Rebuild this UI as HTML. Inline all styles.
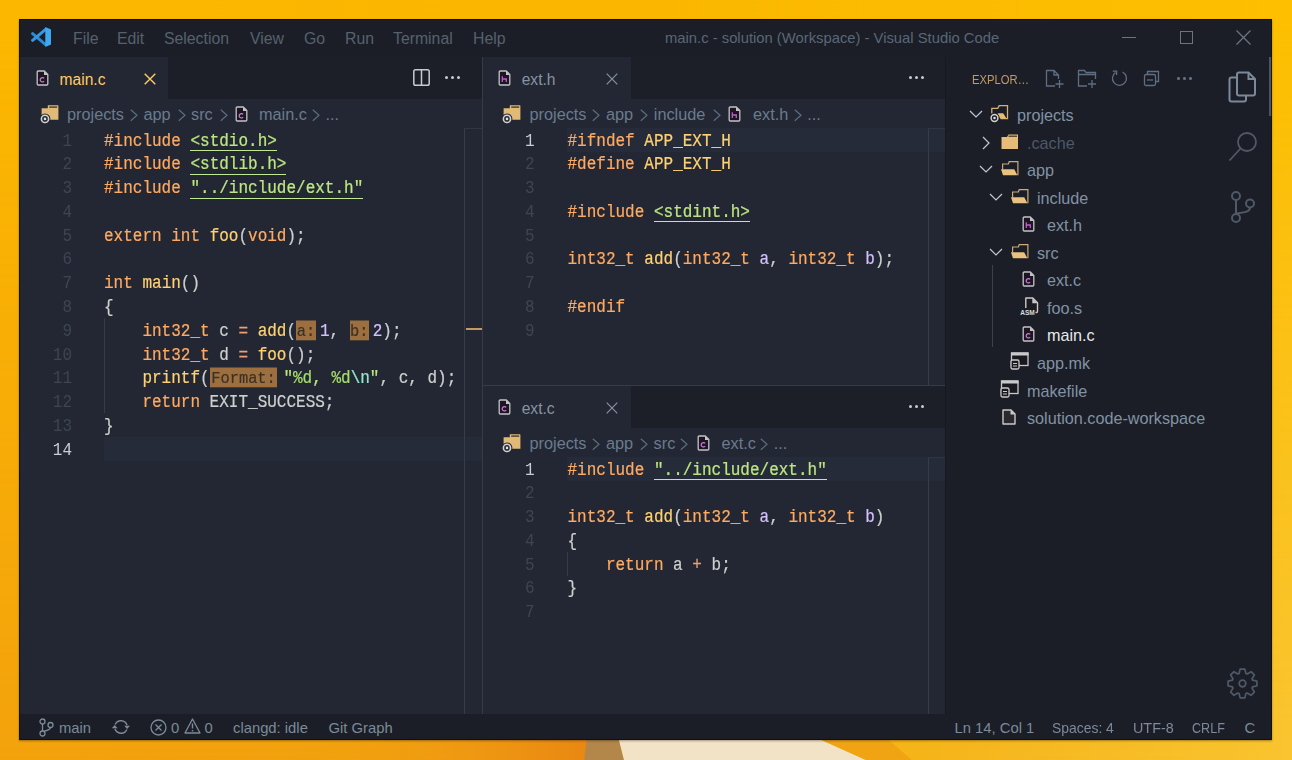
<!DOCTYPE html>
<html><head><meta charset="utf-8">
<style>
*{margin:0;padding:0;box-sizing:border-box}
html,body{width:1292px;height:760px;overflow:hidden}
body{position:relative;background:#f6b308;font-family:"Liberation Sans",sans-serif}
.abs{position:absolute}
.ui{position:absolute;font-family:"Liberation Sans",sans-serif;white-space:nowrap;line-height:20px}
.mono{font-family:"Liberation Mono",monospace;font-size:16px;white-space:pre;line-height:18px;transform:scaleY(1.1);transform-origin:0 14px;-webkit-text-stroke:0.2px currentColor}
.ln{position:absolute;font-family:"Liberation Mono",monospace;font-size:16px;line-height:18px;color:#3d4553;text-align:right;width:40px;transform:scaleY(1.1);transform-origin:0 14px}
.ln.act{color:#c9ced6}
.k{color:#ffaa62}.f{color:#ffd173}.s{color:#bde682}.o{color:#f29e74}.p{color:#d4bfff}.t{color:#cdd0cc}.e{color:#95e6cb}.pc{color:#a5de6a}
.ul{text-decoration:underline;text-decoration-color:#aad86e;text-underline-offset:3px;text-decoration-thickness:1px}
.hint{display:inline-block;background:#9d6f3e;height:18.2px;vertical-align:top;text-align:center;margin-top:-1.2px;position:relative}
.hi{position:absolute;left:0;right:0;top:2.6px;color:#3c3124;font-size:15.4px;line-height:17px;transform:scaleY(0.93);transform-origin:0 15px}
.bc{position:absolute;font-family:"Liberation Sans",sans-serif;font-size:16.3px;color:#6a7b8e;white-space:nowrap;line-height:20px}
.ex{position:absolute;font-family:"Liberation Sans",sans-serif;font-size:16.2px;color:#8594a6;white-space:nowrap;line-height:20px}
.sb{position:absolute;font-family:"Liberation Sans",sans-serif;font-size:14.8px;color:#7c8a9a;white-space:nowrap;line-height:20px}
</style></head><body>
<div class="abs" style="left:0;top:0;width:1292px;height:760px;background:linear-gradient(90deg,#fcb800 0%,#fbb700 50%,#fdbf00 100%)"></div>
<div class="abs" style="left:0;top:0;width:1292px;height:760px;background:linear-gradient(90deg,#f3a20c 0%,#f1a00f 40%,#f5b31a 72%,#f9c430 100%);-webkit-mask-image:linear-gradient(180deg,transparent 0%,transparent 3%,black 100%);mask-image:linear-gradient(180deg,transparent 0%,transparent 3%,black 100%)"></div>
<svg class="abs" style="left:0;top:740px" width="1292" height="20" viewBox="0 0 1292 20">
<defs><linearGradient id="og" x1="0" x2="1"><stop offset="0" stop-color="#f2a00e" stop-opacity="0"/><stop offset="0.6" stop-color="#ef9812"/><stop offset="1" stop-color="#e98812"/></linearGradient>
<linearGradient id="yg" x1="0" x2="1"><stop offset="0" stop-color="#f5b416"/><stop offset="1" stop-color="#f6bb28" stop-opacity="0"/></linearGradient></defs>
<path d="M300 0H587L584 20H300Z" fill="url(#og)"/>
<path d="M586.5 0H619L624 20H584Z" fill="#b3864a"/>
<path d="M619 0H821.5L866 20H624Z" fill="#f2e2c6"/>
<path d="M821.5 0H889L912 20H866Z" fill="#f0a414"/>
<path d="M889 0H1100V20H912Z" fill="url(#yg)"/>
</svg>
<div class="abs" style="left:19px;top:19px;width:1253px;height:721px;background:#1b1e26;box-shadow:0 1px 2px rgba(0,0,0,0.35)"></div>

<svg class="abs" style="left:31px;top:27px" width="20" height="20" viewBox="0 0 20 20">
<path d="M1.6 6.6L14.6 17.6" stroke="#2a8ad6" stroke-width="3" stroke-linecap="round"/>
<path d="M1.6 13.4L14.6 2.4" stroke="#3597e0" stroke-width="3" stroke-linecap="round"/>
<path d="M14.3 0L20 2.6V17.4L14.3 20Z" fill="#40a8f0"/>
</svg>
<div class="ui" style="left:73px;top:28.5px;font-size:15.8px;color:#57616e">File</div>
<div class="ui" style="left:117px;top:28.5px;font-size:15.8px;color:#57616e">Edit</div>
<div class="ui" style="left:164px;top:28.5px;font-size:15.8px;color:#57616e">Selection</div>
<div class="ui" style="left:250px;top:28.5px;font-size:15.8px;color:#57616e">View</div>
<div class="ui" style="left:304px;top:28.5px;font-size:15.8px;color:#57616e">Go</div>
<div class="ui" style="left:345px;top:28.5px;font-size:15.8px;color:#57616e">Run</div>
<div class="ui" style="left:393px;top:28.5px;font-size:15.8px;color:#57616e">Terminal</div>
<div class="ui" style="left:473px;top:28.5px;font-size:15.8px;color:#57616e">Help</div>
<div class="ui" style="left:665px;top:27.5px;font-size:14.8px;color:#5a6778">main.c - solution (Workspace) - Visual Studio Code</div>
<div class="abs" style="left:1122px;top:37px;width:14px;height:1.2px;background:#6b7482"></div>
<div class="abs" style="left:1180px;top:30.5px;width:13px;height:13px;border:1.2px solid #6b7482"></div>
<svg class="abs" style="left:1236px;top:30px" width="15" height="15" viewBox="0 0 15 15"><path d="M0.5 0.5L14.5 14.5M14.5 0.5L0.5 14.5" stroke="#6b7482" stroke-width="1.3"/></svg>
<div class="abs" style="left:19px;top:57px;width:463px;height:42px;background:#1c1f28"></div>
<div class="abs" style="left:19px;top:57px;width:149px;height:42px;background:#222733"></div>
<svg class="abs" style="left:35.5px;top:70px" width="13" height="16" viewBox="0 0 13 16"><path d="M2.2 1H8.3L11.8 4.5V14A1 1 0 0 1 10.8 15H2.2A1 1 0 0 1 1.2 14V2A1 1 0 0 1 2.2 1Z" fill="#1d1622" stroke="#c4c4c8" stroke-width="1.3" stroke-linejoin="round"/><path d="M8 1V5H11.8Z" fill="#c4c4c8"/><path d="M8.1 8.4A2.2 2.2 0 1 0 8.1 11.2" fill="none" stroke="#c77ad8" stroke-width="1.25"/></svg>
<div class="ui" style="left:59.5px;top:69.5px;font-size:15.6px;color:#ffcc66">main.c</div>
<svg class="abs" style="left:144px;top:72.5px" width="12" height="12" viewBox="0 0 12 12"><path d="M0.7 0.7L11.3 11.3M11.3 0.7L0.7 11.3" stroke="#ffcc66" stroke-width="1.4"/></svg>
<div class="abs" style="left:19px;top:99px;width:463px;height:615px;background:#222733"></div>
<svg class="abs" style="left:412.5px;top:69px" width="17" height="17" viewBox="0 0 17 17"><rect x="0.8" y="0.8" width="15.4" height="15.4" rx="1.8" fill="none" stroke="#c6cad2" stroke-width="1.5"/><path d="M8.5 1V16" stroke="#c6cad2" stroke-width="1.5"/></svg>
<div class="abs" style="left:444.8px;top:76.2px;width:3px;height:3px;border-radius:50%;background:#c8ccd4"></div><div class="abs" style="left:451.0px;top:76.2px;width:3px;height:3px;border-radius:50%;background:#c8ccd4"></div><div class="abs" style="left:457.2px;top:76.2px;width:3px;height:3px;border-radius:50%;background:#c8ccd4"></div>
<svg class="abs" style="left:39.5px;top:103.5px" width="20" height="20" viewBox="0 0 20 20"><path d="M1.6 4.2H7.8V1.2H17.8A0.6 0.6 0 0 1 18.4 1.8V15.8H1.6Z" fill="#e2ba78"/><path d="M9.2 3.1H17.2" stroke="#3a3020" stroke-width="1.3"/><circle cx="5" cy="14.9" r="5.4" fill="#23272f"/><circle cx="5" cy="14.9" r="3.6" fill="none" stroke="#d2d2d2" stroke-width="1.6"/><circle cx="5" cy="14.9" r="1.3" fill="#e0e0e0"/></svg>
<div class="bc" style="left:67px;top:104px">projects</div>
<svg class="abs" style="left:129.7px;top:108.7px" width="9" height="13" viewBox="0 0 9 13"><path d="M0.8 0.8L7 6.3L0.8 11.8" fill="none" stroke="#5c6d80" stroke-width="1.2"/></svg>
<div class="bc" style="left:143.5px;top:104px">app</div>
<svg class="abs" style="left:178px;top:108.7px" width="9" height="13" viewBox="0 0 9 13"><path d="M0.8 0.8L7 6.3L0.8 11.8" fill="none" stroke="#5c6d80" stroke-width="1.2"/></svg>
<div class="bc" style="left:191px;top:104px">src</div>
<svg class="abs" style="left:219.5px;top:108.7px" width="9" height="13" viewBox="0 0 9 13"><path d="M0.8 0.8L7 6.3L0.8 11.8" fill="none" stroke="#5c6d80" stroke-width="1.2"/></svg>
<svg class="abs" style="left:234.5px;top:105.5px" width="13" height="16" viewBox="0 0 13 16"><path d="M2.2 1H8.3L11.8 4.5V14A1 1 0 0 1 10.8 15H2.2A1 1 0 0 1 1.2 14V2A1 1 0 0 1 2.2 1Z" fill="#1d1622" stroke="#c4c4c8" stroke-width="1.3" stroke-linejoin="round"/><path d="M8 1V5H11.8Z" fill="#c4c4c8"/><path d="M8.1 8.4A2.2 2.2 0 1 0 8.1 11.2" fill="none" stroke="#c77ad8" stroke-width="1.25"/></svg>
<div class="bc" style="left:259px;top:104px">main.c</div>
<svg class="abs" style="left:312.2px;top:108.7px" width="9" height="13" viewBox="0 0 9 13"><path d="M0.8 0.8L7 6.3L0.8 11.8" fill="none" stroke="#5c6d80" stroke-width="1.2"/></svg>
<div class="bc" style="left:325.5px;top:104px">...</div>
<div class="abs" style="left:104px;top:437.14px;width:378px;height:23.78px;background:#252b38"></div>
<div class="abs" style="left:104px;top:318.24px;width:1px;height:95.12px;background:#353b48"></div>
<div class="abs" style="left:464px;top:128px;width:1px;height:586px;background:#363c49"></div>
<div class="abs" style="left:464px;top:128px;width:18px;height:1px;background:#303642"></div>
<div class="abs" style="left:466px;top:328px;width:16px;height:2px;background:#c39a5e"></div>
<div class="ln" style="left:32px;top:132.50px">1</div>
<div class="abs mono t" style="left:104px;top:132.50px"><span class="k">#include</span> <span class="s">&lt;stdio.h&gt;</span></div>
<div class="ln" style="left:32px;top:156.28px">2</div>
<div class="abs mono t" style="left:104px;top:156.28px"><span class="k">#include</span> <span class="s">&lt;stdlib.h&gt;</span></div>
<div class="ln" style="left:32px;top:180.06px">3</div>
<div class="abs mono t" style="left:104px;top:180.06px"><span class="k">#include</span> <span class="s">"../include/ext.h"</span></div>
<div class="ln" style="left:32px;top:203.84px">4</div>
<div class="ln" style="left:32px;top:227.62px">5</div>
<div class="abs mono t" style="left:104px;top:227.62px"><span class="k">extern</span> <span class="k">int</span> <span class="f">foo</span>(<span class="k">void</span>);</div>
<div class="ln" style="left:32px;top:251.40px">6</div>
<div class="ln" style="left:32px;top:275.18px">7</div>
<div class="abs mono t" style="left:104px;top:275.18px"><span class="k">int</span> <span class="f">main</span>()</div>
<div class="ln" style="left:32px;top:298.96px">8</div>
<div class="abs mono t" style="left:104px;top:298.96px">{</div>
<div class="ln" style="left:32px;top:322.74px">9</div>
<div class="abs mono t" style="left:104px;top:322.74px">    <span class="k">int32_t</span> c <span class="o">=</span> <span class="f">add</span>(<span class="hint" style="width:19.8px;margin-left:0px;margin-right:4px"><span class="hi">a:</span></span><span class="p">1</span>, <span class="hint" style="width:18.7px;margin-left:1.3px;margin-right:4px"><span class="hi">b:</span></span><span class="p">2</span>);</div>
<div class="ln" style="left:32px;top:346.52px">10</div>
<div class="abs mono t" style="left:104px;top:346.52px">    <span class="k">int32_t</span> d <span class="o">=</span> <span class="f">foo</span>();</div>
<div class="ln" style="left:32px;top:370.30px">11</div>
<div class="abs mono t" style="left:104px;top:370.30px">    <span class="f">printf</span>(<span class="hint" style="width:67.2px;margin-left:0.3px;margin-right:6.3px"><span class="hi">Format:</span></span><span class="s">"</span><span class="pc">%d</span><span class="s">, </span><span class="pc">%d</span><span class="e">\n</span><span class="s">"</span>, c, d);</div>
<div class="ln" style="left:32px;top:394.08px">12</div>
<div class="abs mono t" style="left:104px;top:394.08px">    <span class="k">return</span> EXIT_SUCCESS;</div>
<div class="ln" style="left:32px;top:417.86px">13</div>
<div class="abs mono t" style="left:104px;top:417.86px">}</div>
<div class="ln act" style="left:32px;top:441.64px">14</div>
<div class="abs" style="left:190.4px;top:150px;width:86.4px;height:1px;background:#c0ea92"></div>
<div class="abs" style="left:190.4px;top:174px;width:96.0px;height:1px;background:#c0ea92"></div>
<div class="abs" style="left:190.4px;top:198px;width:172.8px;height:1px;background:#c0ea92"></div>
<div class="abs" style="left:482px;top:57px;width:1px;height:657px;background:#353b47"></div>
<div class="abs" style="left:483px;top:57px;width:462px;height:42px;background:#1c1f28"></div>
<div class="abs" style="left:483px;top:57px;width:148px;height:42px;background:#222733"></div>
<svg class="abs" style="left:497.7px;top:70px" width="13" height="16" viewBox="0 0 13 16"><path d="M2.2 1H8.3L11.8 4.5V14A1 1 0 0 1 10.8 15H2.2A1 1 0 0 1 1.2 14V2A1 1 0 0 1 2.2 1Z" fill="#1d1622" stroke="#c4c4c8" stroke-width="1.3" stroke-linejoin="round"/><path d="M8 1V5H11.8Z" fill="#c4c4c8"/><path d="M4.3 6.3V12M4.3 9H8.3V12" fill="none" stroke="#c25ad2" stroke-width="1.3"/></svg>
<div class="ui" style="left:521.7px;top:69.5px;font-size:15.6px;color:#8893a1">ext.h</div>
<svg class="abs" style="left:606.2px;top:72.5px" width="12" height="12" viewBox="0 0 12 12"><path d="M0.7 0.7L11.3 11.3M11.3 0.7L0.7 11.3" stroke="#8893a1" stroke-width="1.2"/></svg>
<div class="abs" style="left:483px;top:99px;width:462px;height:286px;background:#222733"></div>
<div class="abs" style="left:908.5px;top:76.2px;width:3px;height:3px;border-radius:50%;background:#c8ccd4"></div><div class="abs" style="left:914.7px;top:76.2px;width:3px;height:3px;border-radius:50%;background:#c8ccd4"></div><div class="abs" style="left:920.9px;top:76.2px;width:3px;height:3px;border-radius:50%;background:#c8ccd4"></div>
<svg class="abs" style="left:501.7px;top:103.5px" width="20" height="20" viewBox="0 0 20 20"><path d="M1.6 4.2H7.8V1.2H17.8A0.6 0.6 0 0 1 18.4 1.8V15.8H1.6Z" fill="#e2ba78"/><path d="M9.2 3.1H17.2" stroke="#3a3020" stroke-width="1.3"/><circle cx="5" cy="14.9" r="5.4" fill="#23272f"/><circle cx="5" cy="14.9" r="3.6" fill="none" stroke="#d2d2d2" stroke-width="1.6"/><circle cx="5" cy="14.9" r="1.3" fill="#e0e0e0"/></svg>
<div class="bc" style="left:529.5px;top:104px">projects</div>
<svg class="abs" style="left:592px;top:108.7px" width="9" height="13" viewBox="0 0 9 13"><path d="M0.8 0.8L7 6.3L0.8 11.8" fill="none" stroke="#5c6d80" stroke-width="1.2"/></svg>
<div class="bc" style="left:606px;top:104px">app</div>
<svg class="abs" style="left:640.3px;top:108.7px" width="9" height="13" viewBox="0 0 9 13"><path d="M0.8 0.8L7 6.3L0.8 11.8" fill="none" stroke="#5c6d80" stroke-width="1.2"/></svg>
<div class="bc" style="left:653.8px;top:104px">include</div>
<svg class="abs" style="left:712.5px;top:108.7px" width="9" height="13" viewBox="0 0 9 13"><path d="M0.8 0.8L7 6.3L0.8 11.8" fill="none" stroke="#5c6d80" stroke-width="1.2"/></svg>
<svg class="abs" style="left:728.3px;top:105.5px" width="13" height="16" viewBox="0 0 13 16"><path d="M2.2 1H8.3L11.8 4.5V14A1 1 0 0 1 10.8 15H2.2A1 1 0 0 1 1.2 14V2A1 1 0 0 1 2.2 1Z" fill="#1d1622" stroke="#c4c4c8" stroke-width="1.3" stroke-linejoin="round"/><path d="M8 1V5H11.8Z" fill="#c4c4c8"/><path d="M4.3 6.3V12M4.3 9H8.3V12" fill="none" stroke="#c25ad2" stroke-width="1.3"/></svg>
<div class="bc" style="left:753px;top:104px">ext.h</div>
<svg class="abs" style="left:793.5px;top:108.7px" width="9" height="13" viewBox="0 0 9 13"><path d="M0.8 0.8L7 6.3L0.8 11.8" fill="none" stroke="#5c6d80" stroke-width="1.2"/></svg>
<div class="bc" style="left:807.2px;top:104px">...</div>
<div class="abs" style="left:567px;top:128px;width:378px;height:23.78px;background:#252b38"></div>
<div class="abs" style="left:928px;top:128px;width:1px;height:257px;background:#363c49"></div>
<div class="abs" style="left:928px;top:128px;width:17px;height:1px;background:#303642"></div>
<div class="ln act" style="left:494.5px;top:132.50px">1</div>
<div class="abs mono t" style="left:567.5px;top:132.50px"><span class="k">#ifndef</span> <span class="f">APP_EXT_H</span></div>
<div class="ln" style="left:494.5px;top:156.28px">2</div>
<div class="abs mono t" style="left:567.5px;top:156.28px"><span class="k">#define</span> <span class="f">APP_EXT_H</span></div>
<div class="ln" style="left:494.5px;top:180.06px">3</div>
<div class="ln" style="left:494.5px;top:203.84px">4</div>
<div class="abs mono t" style="left:567.5px;top:203.84px"><span class="k">#include</span> <span class="s">&lt;stdint.h&gt;</span></div>
<div class="ln" style="left:494.5px;top:227.62px">5</div>
<div class="ln" style="left:494.5px;top:251.40px">6</div>
<div class="abs mono t" style="left:567.5px;top:251.40px"><span class="k">int32_t</span> <span class="f">add</span>(<span class="k">int32_t</span> <span class="p">a</span>, <span class="k">int32_t</span> <span class="p">b</span>);</div>
<div class="ln" style="left:494.5px;top:275.18px">7</div>
<div class="ln" style="left:494.5px;top:298.96px">8</div>
<div class="abs mono t" style="left:567.5px;top:298.96px"><span class="k">#endif</span></div>
<div class="ln" style="left:494.5px;top:322.74px">9</div>
<div class="abs" style="left:653.9px;top:221px;width:96.0px;height:1px;background:#c0ea92"></div>
<div class="abs" style="left:483px;top:385px;width:462px;height:1px;background:#353b47"></div>
<div class="abs" style="left:483px;top:386px;width:462px;height:42px;background:#1c1f28"></div>
<div class="abs" style="left:483px;top:386px;width:148px;height:42px;background:#222733"></div>
<svg class="abs" style="left:497.7px;top:399px" width="13" height="16" viewBox="0 0 13 16"><path d="M2.2 1H8.3L11.8 4.5V14A1 1 0 0 1 10.8 15H2.2A1 1 0 0 1 1.2 14V2A1 1 0 0 1 2.2 1Z" fill="#1d1622" stroke="#c4c4c8" stroke-width="1.3" stroke-linejoin="round"/><path d="M8 1V5H11.8Z" fill="#c4c4c8"/><path d="M8.1 8.4A2.2 2.2 0 1 0 8.1 11.2" fill="none" stroke="#c77ad8" stroke-width="1.25"/></svg>
<div class="ui" style="left:521.7px;top:398.5px;font-size:15.6px;color:#8893a1">ext.c</div>
<svg class="abs" style="left:606.2px;top:401.5px" width="12" height="12" viewBox="0 0 12 12"><path d="M0.7 0.7L11.3 11.3M11.3 0.7L0.7 11.3" stroke="#8893a1" stroke-width="1.2"/></svg>
<div class="abs" style="left:483px;top:428px;width:462px;height:286px;background:#222733"></div>
<div class="abs" style="left:908.5px;top:405.2px;width:3px;height:3px;border-radius:50%;background:#c8ccd4"></div><div class="abs" style="left:914.7px;top:405.2px;width:3px;height:3px;border-radius:50%;background:#c8ccd4"></div><div class="abs" style="left:920.9px;top:405.2px;width:3px;height:3px;border-radius:50%;background:#c8ccd4"></div>
<svg class="abs" style="left:501.7px;top:432.5px" width="20" height="20" viewBox="0 0 20 20"><path d="M1.6 4.2H7.8V1.2H17.8A0.6 0.6 0 0 1 18.4 1.8V15.8H1.6Z" fill="#e2ba78"/><path d="M9.2 3.1H17.2" stroke="#3a3020" stroke-width="1.3"/><circle cx="5" cy="14.9" r="5.4" fill="#23272f"/><circle cx="5" cy="14.9" r="3.6" fill="none" stroke="#d2d2d2" stroke-width="1.6"/><circle cx="5" cy="14.9" r="1.3" fill="#e0e0e0"/></svg>
<div class="bc" style="left:529.5px;top:433px">projects</div>
<svg class="abs" style="left:592px;top:437.7px" width="9" height="13" viewBox="0 0 9 13"><path d="M0.8 0.8L7 6.3L0.8 11.8" fill="none" stroke="#5c6d80" stroke-width="1.2"/></svg>
<div class="bc" style="left:606px;top:433px">app</div>
<svg class="abs" style="left:640.3px;top:437.7px" width="9" height="13" viewBox="0 0 9 13"><path d="M0.8 0.8L7 6.3L0.8 11.8" fill="none" stroke="#5c6d80" stroke-width="1.2"/></svg>
<div class="bc" style="left:653.6px;top:433px">src</div>
<svg class="abs" style="left:680.3px;top:437.7px" width="9" height="13" viewBox="0 0 9 13"><path d="M0.8 0.8L7 6.3L0.8 11.8" fill="none" stroke="#5c6d80" stroke-width="1.2"/></svg>
<svg class="abs" style="left:697.4px;top:434.5px" width="13" height="16" viewBox="0 0 13 16"><path d="M2.2 1H8.3L11.8 4.5V14A1 1 0 0 1 10.8 15H2.2A1 1 0 0 1 1.2 14V2A1 1 0 0 1 2.2 1Z" fill="#1d1622" stroke="#c4c4c8" stroke-width="1.3" stroke-linejoin="round"/><path d="M8 1V5H11.8Z" fill="#c4c4c8"/><path d="M8.1 8.4A2.2 2.2 0 1 0 8.1 11.2" fill="none" stroke="#c77ad8" stroke-width="1.25"/></svg>
<div class="bc" style="left:721.5px;top:433px">ext.c</div>
<svg class="abs" style="left:760px;top:437.7px" width="9" height="13" viewBox="0 0 9 13"><path d="M0.8 0.8L7 6.3L0.8 11.8" fill="none" stroke="#5c6d80" stroke-width="1.2"/></svg>
<div class="bc" style="left:773.8px;top:433px">...</div>
<div class="abs" style="left:567px;top:457px;width:378px;height:23.78px;background:#252b38"></div>
<div class="abs" style="left:567px;top:552.12px;width:1px;height:23.78px;background:#353b48"></div>
<div class="abs" style="left:928px;top:457px;width:1px;height:257px;background:#363c49"></div>
<div class="abs" style="left:928px;top:457px;width:17px;height:1px;background:#303642"></div>
<div class="ln act" style="left:494.5px;top:461.50px">1</div>
<div class="abs mono t" style="left:567.5px;top:461.50px"><span class="k">#include</span> <span class="s">"../include/ext.h"</span></div>
<div class="ln" style="left:494.5px;top:485.28px">2</div>
<div class="ln" style="left:494.5px;top:509.06px">3</div>
<div class="abs mono t" style="left:567.5px;top:509.06px"><span class="k">int32_t</span> <span class="f">add</span>(<span class="k">int32_t</span> <span class="p">a</span>, <span class="k">int32_t</span> <span class="p">b</span>)</div>
<div class="ln" style="left:494.5px;top:532.84px">4</div>
<div class="abs mono t" style="left:567.5px;top:532.84px">{</div>
<div class="ln" style="left:494.5px;top:556.62px">5</div>
<div class="abs mono t" style="left:567.5px;top:556.62px">    <span class="k">return</span> a <span class="o">+</span> b;</div>
<div class="ln" style="left:494.5px;top:580.40px">6</div>
<div class="abs mono t" style="left:567.5px;top:580.40px">}</div>
<div class="ln" style="left:494.5px;top:604.18px">7</div>
<div class="abs" style="left:653.9px;top:479px;width:172.8px;height:1px;background:#c0ea92"></div>
<div class="abs" style="left:945px;top:57px;width:1px;height:657px;background:#161920"></div>
<div class="ui" style="left:972px;top:69.5px;font-size:13.4px;color:#c39a62;transform:scaleX(0.84);transform-origin:0 0">EXPLOR…</div>
<svg class="abs" style="left:1045px;top:69px" width="20" height="20" viewBox="0 0 20 20"><path d="M10 17H1.5V1.5H9L13.5 6V10M9 1.5V6H13.5" fill="none" stroke="#5f6e82" stroke-width="1.3"/><path d="M14.5 11V19M10.5 15H18.5" stroke="#5f6e82" stroke-width="1.3"/></svg>
<svg class="abs" style="left:1077px;top:69px" width="21" height="20" viewBox="0 0 21 20"><path d="M10 17H1.5V1.5H7.5L9 3.5H18.5V10M1.5 5.5H18.5" fill="none" stroke="#5f6e82" stroke-width="1.3"/><path d="M15 11V19M11 15H19" stroke="#5f6e82" stroke-width="1.3"/></svg>
<svg class="abs" style="left:1110px;top:69px" width="18" height="18" viewBox="0 0 18 18"><path d="M5.5 3.5A7 7 0 1 0 12.5 3" fill="none" stroke="#5f6e82" stroke-width="1.3"/><path d="M2.8 2.2H6.6V6" fill="none" stroke="#5f6e82" stroke-width="1.3"/></svg>
<svg class="abs" style="left:1143px;top:70px" width="17" height="17" viewBox="0 0 17 17"><path d="M4.5 4.5V1.5H15.5V11.5H12.5" fill="none" stroke="#5f6e82" stroke-width="1.3"/><rect x="1.5" y="4.5" width="11" height="11" rx="1.5" fill="none" stroke="#5f6e82" stroke-width="1.3"/><path d="M4 10H10" stroke="#5f6e82" stroke-width="1.3"/></svg>
<div class="abs" style="left:1177.0px;top:77px;width:2.6px;height:2.6px;border-radius:50%;background:#5f6e82"></div><div class="abs" style="left:1183.2px;top:77px;width:2.6px;height:2.6px;border-radius:50%;background:#5f6e82"></div><div class="abs" style="left:1189.4px;top:77px;width:2.6px;height:2.6px;border-radius:50%;background:#5f6e82"></div>
<svg class="abs" style="left:969px;top:107.0px" width="14" height="14" viewBox="0 0 14 14"><path d="M1 4L7 10L13 4" fill="none" stroke="#c0c8d2" stroke-width="1.2"/></svg>
<svg class="abs" style="left:990px;top:104.0px" width="19" height="20" viewBox="0 0 19 20"><path d="M1.8 9.6V4.3H7.7L9.2 1.6H17.5V14.6H10.6" fill="none" stroke="#d2b078" stroke-width="1.3"/><path d="M7.5 9.2H13.2L16.5 14.6H10Z" fill="#e8bd6e"/><circle cx="4.5" cy="14" r="5.1" fill="#1b1e26"/><circle cx="4.5" cy="14" r="3.4" fill="none" stroke="#d0d0d0" stroke-width="1.5"/><circle cx="4.5" cy="14" r="1.3" fill="#dadada"/></svg>
<div class="ex" style="left:1017px;top:105.0px;color:#8192a5">projects</div>
<svg class="abs" style="left:981px;top:135.6px" width="10" height="14" viewBox="0 0 10 14"><path d="M2 1L8 7L2 13" fill="none" stroke="#c0c8d2" stroke-width="1.2"/></svg>
<svg class="abs" style="left:1001px;top:133.6px" width="18" height="16" viewBox="0 0 18 16"><path d="M0.5 3H6L7.5 0.5H17V15H0.5Z" fill="#e6bd78"/><path d="M7.5 2.2H16" stroke="#3a3022" stroke-width="1.2"/></svg>
<div class="ex" style="left:1027px;top:132.6px;color:#4c5866">.cache</div>
<svg class="abs" style="left:979px;top:162.1px" width="14" height="14" viewBox="0 0 14 14"><path d="M1 4L7 10L13 4" fill="none" stroke="#c0c8d2" stroke-width="1.2"/></svg>
<svg class="abs" style="left:1000px;top:161.1px" width="19" height="16" viewBox="0 0 19 16"><path d="M2.6 8.4V3.0H8.4L9.2 0.6H17.9V14.2" fill="none" stroke="#c9aa78" stroke-width="1.2"/><path d="M1 8.3H14.2L17.4 14.3H3Z" fill="#e9c27f"/></svg>
<div class="ex" style="left:1027px;top:160.1px;color:#8192a5">app</div>
<svg class="abs" style="left:989px;top:189.7px" width="14" height="14" viewBox="0 0 14 14"><path d="M1 4L7 10L13 4" fill="none" stroke="#c0c8d2" stroke-width="1.2"/></svg>
<svg class="abs" style="left:1010px;top:188.7px" width="19" height="16" viewBox="0 0 19 16"><path d="M2.6 8.4V3.0H8.4L9.2 0.6H17.9V14.2" fill="none" stroke="#c9aa78" stroke-width="1.2"/><path d="M1 8.3H14.2L17.4 14.3H3Z" fill="#e9c27f"/></svg>
<div class="ex" style="left:1037px;top:187.7px;color:#8192a5">include</div>
<svg class="abs" style="left:1022px;top:215.8px" width="13" height="16" viewBox="0 0 13 16"><path d="M2.2 1H8.3L11.8 4.5V14A1 1 0 0 1 10.8 15H2.2A1 1 0 0 1 1.2 14V2A1 1 0 0 1 2.2 1Z" fill="#1d1622" stroke="#c4c4c8" stroke-width="1.3" stroke-linejoin="round"/><path d="M8 1V5H11.8Z" fill="#c4c4c8"/><path d="M4.3 6.3V12M4.3 9H8.3V12" fill="none" stroke="#c25ad2" stroke-width="1.3"/></svg>
<div class="ex" style="left:1047px;top:215.2px;color:#8192a5">ext.h</div>
<svg class="abs" style="left:989px;top:244.8px" width="14" height="14" viewBox="0 0 14 14"><path d="M1 4L7 10L13 4" fill="none" stroke="#c0c8d2" stroke-width="1.2"/></svg>
<svg class="abs" style="left:1010px;top:243.8px" width="19" height="16" viewBox="0 0 19 16"><path d="M2.6 8.4V3.0H8.4L9.2 0.6H17.9V14.2" fill="none" stroke="#c9aa78" stroke-width="1.2"/><path d="M1 8.3H14.2L17.4 14.3H3Z" fill="#e9c27f"/></svg>
<div class="ex" style="left:1037px;top:242.8px;color:#8192a5">src</div>
<svg class="abs" style="left:1022px;top:270.7px" width="13" height="16" viewBox="0 0 13 16"><path d="M2.2 1H8.3L11.8 4.5V14A1 1 0 0 1 10.8 15H2.2A1 1 0 0 1 1.2 14V2A1 1 0 0 1 2.2 1Z" fill="#1d1622" stroke="#c4c4c8" stroke-width="1.3" stroke-linejoin="round"/><path d="M8 1V5H11.8Z" fill="#c4c4c8"/><path d="M8.1 8.4A2.2 2.2 0 1 0 8.1 11.2" fill="none" stroke="#c77ad8" stroke-width="1.25"/></svg>
<div class="ex" style="left:1047px;top:270.3px;color:#8192a5">ext.c</div>
<svg class="abs" style="left:1020px;top:297.1px" width="20" height="19" viewBox="0 0 20 19"><path d="M5.8 11V1H12.8L17.5 5.7V14.5A1 1 0 0 1 16.5 15.5H15.5" fill="#1c1c20" stroke="#c9c9cc" stroke-width="1.4" stroke-linejoin="round"/><path d="M12.3 1V6.2H17.5Z" fill="#c9c9cc"/><text x="0.3" y="17.8" font-family="Liberation Sans" font-weight="bold" font-size="7.2" fill="#dcdcdc" textLength="14.5" lengthAdjust="spacingAndGlyphs">ASM</text></svg>
<div class="ex" style="left:1047px;top:297.9px;color:#8192a5">foo.s</div>
<svg class="abs" style="left:1022px;top:325.8px" width="13" height="16" viewBox="0 0 13 16"><path d="M2.2 1H8.3L11.8 4.5V14A1 1 0 0 1 10.8 15H2.2A1 1 0 0 1 1.2 14V2A1 1 0 0 1 2.2 1Z" fill="#1d1622" stroke="#c4c4c8" stroke-width="1.3" stroke-linejoin="round"/><path d="M8 1V5H11.8Z" fill="#c4c4c8"/><path d="M8.1 8.4A2.2 2.2 0 1 0 8.1 11.2" fill="none" stroke="#c77ad8" stroke-width="1.25"/></svg>
<div class="ex" style="left:1047px;top:325.4px;color:#e6e8ec">main.c</div>
<svg class="abs" style="left:1010px;top:352.1px" width="19" height="18" viewBox="0 0 19 18"><rect x="1.5" y="1" width="16.5" height="12.5" fill="#1a1a1e" stroke="#c9c9cc" stroke-width="1.3"/><rect x="1" y="0.5" width="17.5" height="3" fill="#c9c9cc"/><rect x="1" y="8" width="8" height="9" rx="1.5" fill="#1a1a1e" stroke="#c9c9cc" stroke-width="1.3"/><path d="M3 11.5H7M3 14H7" stroke="#c9c9cc" stroke-width="1"/></svg>
<div class="ex" style="left:1037px;top:353.0px;color:#8192a5">app.mk</div>
<svg class="abs" style="left:1000px;top:379.6px" width="19" height="18" viewBox="0 0 19 18"><rect x="1.5" y="1" width="16.5" height="12.5" fill="#1a1a1e" stroke="#c9c9cc" stroke-width="1.3"/><rect x="1" y="0.5" width="17.5" height="3" fill="#c9c9cc"/><rect x="1" y="8" width="8" height="9" rx="1.5" fill="#1a1a1e" stroke="#c9c9cc" stroke-width="1.3"/><path d="M3 11.5H7M3 14H7" stroke="#c9c9cc" stroke-width="1"/></svg>
<div class="ex" style="left:1027px;top:380.5px;color:#8192a5">makefile</div>
<svg class="abs" style="left:1002px;top:408.5px" width="14" height="16" viewBox="0 0 14 16"><path d="M1 1H9L13 5V15H1Z" fill="#2a2a2e" stroke="#c9c9cc" stroke-width="1.4" stroke-linejoin="round"/><path d="M8.5 1V5.5H13Z" fill="#c9c9cc"/></svg>
<div class="ex" style="left:1027px;top:408.1px;color:#8192a5">solution.code-workspace</div>
<div class="abs" style="left:992px;top:265px;width:1px;height:82px;background:#3a404c"></div>
<svg class="abs" style="left:1228px;top:71px" width="29" height="32" viewBox="0 0 29 32"><path d="M9 6.5H3.5A2 2 0 0 0 1.5 8.5V28.5A2 2 0 0 0 3.5 30.5H16A2 2 0 0 0 18 28.5V24.5" fill="none" stroke="#7b899b" stroke-width="2"/><path d="M11 1.5H20.5L27 8V22.5A2 2 0 0 1 25 24.5H11A2 2 0 0 1 9 22.5V3.5A2 2 0 0 1 11 1.5Z" fill="none" stroke="#7b899b" stroke-width="2"/><path d="M20.5 1.5V8H27" fill="none" stroke="#7b899b" stroke-width="2"/></svg>
<svg class="abs" style="left:1228px;top:131px" width="30" height="31" viewBox="0 0 30 31"><circle cx="19" cy="11" r="9" fill="none" stroke="#4f5968" stroke-width="1.8"/><path d="M12.5 17.5L1.5 29.5" stroke="#4f5968" stroke-width="1.8"/></svg>
<svg class="abs" style="left:1230px;top:191px" width="26" height="32" viewBox="0 0 26 32"><circle cx="6" cy="5" r="4" fill="none" stroke="#4f5968" stroke-width="2"/><circle cx="6" cy="27" r="4" fill="none" stroke="#4f5968" stroke-width="2"/><circle cx="20" cy="12.5" r="4" fill="none" stroke="#4f5968" stroke-width="2"/><path d="M6 9V23M20 16.5C20 21 14 21.5 6.5 22.5" fill="none" stroke="#4f5968" stroke-width="2"/></svg>
<svg class="abs" style="left:1227px;top:668px" width="31" height="31" viewBox="0 0 31 31"><polygon points="13.17,1.09 17.83,1.09 18.93,5.47 20.16,5.98 24.05,3.66 27.34,6.95 25.02,10.84 25.53,12.07 29.91,13.17 29.91,17.83 25.53,18.93 25.02,20.16 27.34,24.05 24.05,27.34 20.16,25.02 18.93,25.53 17.83,29.91 13.17,29.91 12.07,25.53 10.84,25.02 6.95,27.34 3.66,24.05 5.98,20.16 5.47,18.93 1.09,17.83 1.09,13.17 5.47,12.07 5.98,10.84 3.66,6.95 6.95,3.66 10.84,5.98 12.07,5.47" fill="none" stroke="#4f5968" stroke-width="1.7" stroke-linejoin="round"/><circle cx="15.5" cy="15.5" r="3.3" fill="none" stroke="#4f5968" stroke-width="1.7"/></svg>
<div class="abs" style="left:1269px;top:57px;width:3px;height:59px;background:#4b5363"></div>
<svg class="abs" style="left:39px;top:717.5px" width="15" height="19" viewBox="0 0 15 19"><circle cx="3.5" cy="3.5" r="2.5" fill="none" stroke="#7c8a9a" stroke-width="1.3"/><circle cx="3.5" cy="15.5" r="2.5" fill="none" stroke="#7c8a9a" stroke-width="1.3"/><circle cx="11.5" cy="7" r="2.5" fill="none" stroke="#7c8a9a" stroke-width="1.3"/><path d="M3.5 6V13M11.5 9.5C11.5 12 8 12.5 4 13.5" fill="none" stroke="#7c8a9a" stroke-width="1.3"/></svg>
<div class="sb" style="left:59px;top:717.5px">main</div>
<svg class="abs" style="left:111px;top:719px" width="20" height="16" viewBox="0 0 20 16"><path d="M4.2 5.5A6.3 6.3 0 0 1 16 6.2M15.8 10.5A6.3 6.3 0 0 1 4 9.8" fill="none" stroke="#7c8a9a" stroke-width="1.5"/><path d="M13.2 6.8H19L16.1 10Z M0.8 9.2H6.6L3.7 6Z" fill="#7c8a9a"/></svg>
<svg class="abs" style="left:150px;top:719px" width="17" height="17" viewBox="0 0 17 17"><circle cx="8.5" cy="8.5" r="7.5" fill="none" stroke="#7c8a9a" stroke-width="1.3"/><path d="M5.5 5.5L11.5 11.5M11.5 5.5L5.5 11.5" stroke="#7c8a9a" stroke-width="1.3"/></svg>
<div class="sb" style="left:171px;top:717.5px">0</div>
<svg class="abs" style="left:184px;top:718px" width="17" height="16" viewBox="0 0 17 16"><path d="M8.5 1L16 15H1Z" fill="none" stroke="#7c8a9a" stroke-width="1.3" stroke-linejoin="round"/><path d="M8.5 5.5V10.5M8.5 12V13.5" stroke="#7c8a9a" stroke-width="1.4"/></svg>
<div class="sb" style="left:204.5px;top:717.5px">0</div>
<div class="sb" style="left:233px;top:717.5px">clangd: idle</div>
<div class="sb" style="left:328.5px;top:717.5px">Git Graph</div>
<div class="sb" style="left:954.5px;top:717.5px">Ln 14, Col 1</div>
<div class="sb" style="left:1051.5px;top:717.5px;transform:scaleX(0.94);transform-origin:0 0">Spaces: 4</div>
<div class="sb" style="left:1132.5px;top:717.5px;transform:scaleX(0.97);transform-origin:0 0">UTF-8</div>
<div class="sb" style="left:1192px;top:717.5px;transform:scaleX(0.85);transform-origin:0 0">CRLF</div>
<div class="sb" style="left:1244.5px;top:717.5px">C</div>
<div class="abs" style="left:19px;top:19px;width:1253px;height:721px;border:1px solid rgba(14,12,10,0.8)"></div>
</body></html>
